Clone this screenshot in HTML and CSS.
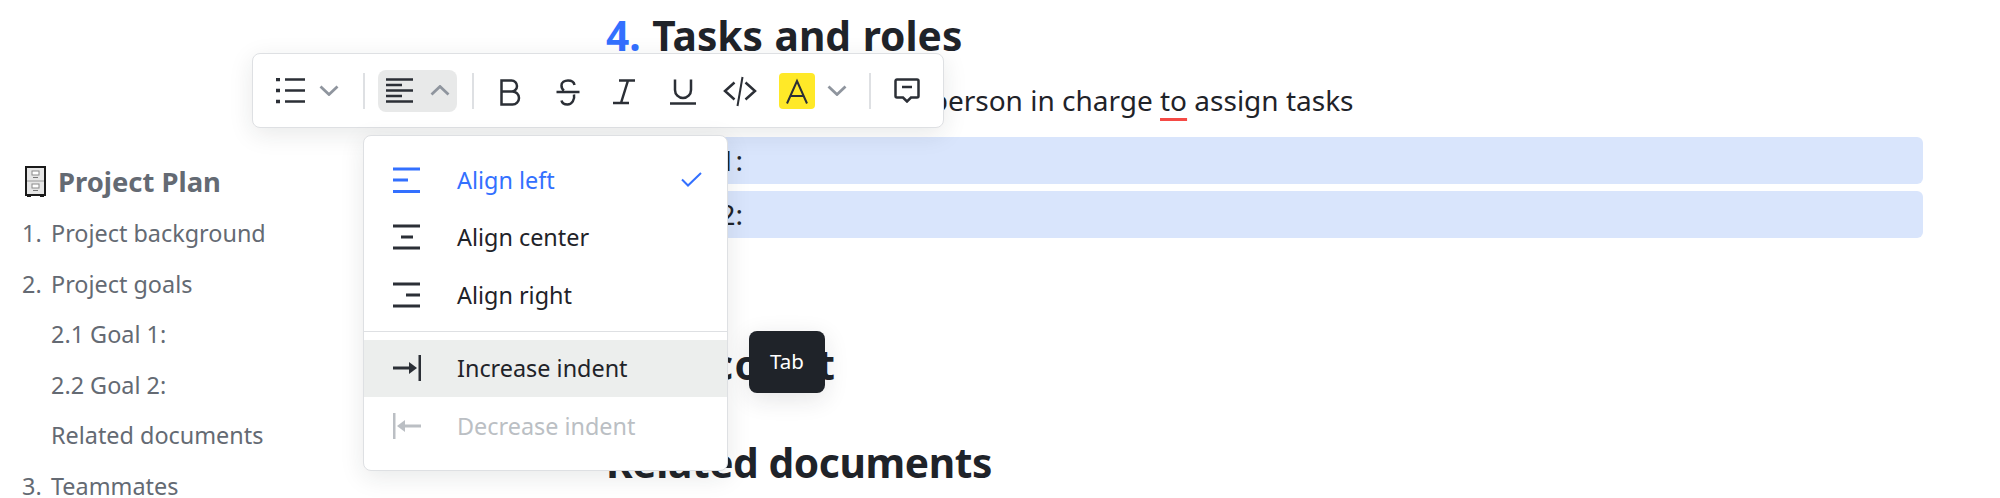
FILE: index.html
```html
<!DOCTYPE html>
<html lang="en">
<head>
  <meta charset="UTF-8" />
  <title>Project Plan</title>
  <link rel="stylesheet" href="styles.css">
</head>
<body>

<aside class="outline">
  <div class="outline-title">
    <svg class="cabinet" width="21" height="31" viewBox="0 0 21 31">
      <rect x="1" y="1" width="19" height="28" fill="#e6e6e6" stroke="#1a1a1a" stroke-width="2"/>
      <path d="M2 15h17" stroke="#9a9a9a"/>
      <rect x="7" y="5" width="7" height="4" fill="#fff" stroke="#8a8a8a"/>
      <rect x="7" y="18" width="7" height="4" fill="#fff" stroke="#8a8a8a"/>
      <path d="M8 11.500h5M8 24.500h5" stroke="#777"/>
      <path d="M2 29v2h4v-2M15 29v2h4v-2" fill="#1a1a1a"/>
    </svg>
    Project Plan
  </div>
  <ul class="outline-list">
    <li><span class="num">1.</span>Project background</li>
    <li><span class="num">2.</span>Project goals</li>
    <li><span class="num"></span>2.1 Goal 1:</li>
    <li><span class="num"></span>2.2 Goal 2:</li>
    <li><span class="num"></span>Related documents</li>
    <li><span class="num">3.</span>Teammates</li>
  </ul>
</aside>

<main class="doc">
  <h1 class="first"><span class="h-num">4.</span> Tasks and roles</h1>
  <p class="intro">Please contact the main person in charge <span class="typo">to</span> assign tasks</p>
  <div class="block">Goal 1:</div>
  <div class="block">Goal 2:</div>
  <h1 class="budget"><span class="h-num">5.</span> Account</h1>
  <h1 class="related">Related documents</h1>
</main>

<!-- floating toolbar -->
<div class="toolbar">
  <svg class="list-ico" width="29" height="26" viewBox="0 0 29 26">
    <path d="M0 1.500h4M0 12.500h4M0 23.500h4" stroke="#2b2f36" stroke-width="3.500"/>
    <path d="M9 1.500h20M9 12.500h20M9 23.500h20" stroke="#2b2f36" stroke-width="2.500"/>
  </svg>
  <svg class="chev" width="20" height="11" viewBox="0 0 20 11"><path d="M1.500 1.500L10 9.500l8.500-8" fill="none" stroke="#8f959e" stroke-width="2.800"/></svg>
  <span class="sep sep-a"></span>
  <div class="active-btn">
    <svg width="27" height="25" viewBox="0 0 27 25">
      <path d="M0 1.500h27M0 7h16M0 12.500h27M0 18h16M0 23.500h27" stroke="#2b2f36" stroke-width="2.500"/>
    </svg>
    <svg width="20" height="11" viewBox="0 0 20 11"><path d="M1.500 9.500L10 1.500l8.500 8" fill="none" stroke="#8f959e" stroke-width="2.800"/></svg>
  </div>
  <span class="sep sep-b"></span>
  <div class="marks">
    <svg width="36" height="36" viewBox="0 0 36 36" fill="none" stroke="#2b2f36" stroke-width="2.500">
      <path d="M9.500 18.500V7.500h10a5.500 5.500 0 0 1 0 11h-10v13h11a6.500 6.500 0 0 0 0-13"/>
    </svg>
    <svg width="36" height="36" viewBox="0 0 36 36" fill="none" stroke="#2b2f36" stroke-width="2.500">
      <path d="M6.500 19h23M24.500 12C24 9 21.500 7.500 18 7.500c-3.500 0-6.500 2-6.500 5 0 2.500 1 4 2.500 5M24 21.500c1 5-2 10-6.500 10-3 0-5.500-1.500-6-4"/>
    </svg>
    <svg width="36" height="36" viewBox="0 0 36 36" fill="none" stroke="#2b2f36" stroke-width="2.500">
      <path d="M12 7.500h16M6 30h16M21 7.500L14 30"/>
    </svg>
    <svg width="36" height="36" viewBox="0 0 36 36" fill="none" stroke="#2b2f36" stroke-width="2.500">
      <path d="M10 6.500V17a8 8 0 0 0 16 0V6.500M5 30.500h26"/>
    </svg>
    <svg width="36" height="36" viewBox="0 0 36 36" fill="none" stroke="#2b2f36" stroke-width="2.500">
      <path d="M12.500 9.500L3 18l9.500 8.500M23.500 9.500L33 18l-9.500 8.500"/>
      <path d="M20.500 4l-5 29" stroke-width="2"/>
    </svg>
    <div class="hl-btn">
      <svg width="36" height="36" viewBox="0 0 36 36" fill="none" stroke="#2b2f36" stroke-width="2">
        <path d="M8 30.500L18 8l10 22.500M11 23h14"/>
      </svg>
    </div>
  </div>
  <svg class="chev chev-hl" width="20" height="11" viewBox="0 0 20 11"><path d="M1.500 1.500L10 9.500l8.500-8" fill="none" stroke="#8f959e" stroke-width="2.800"/></svg>
  <span class="sep sep-c"></span>
  <svg class="comment-ico" width="26" height="25" viewBox="0 0 26 25" fill="none" stroke="#2b2f36" stroke-width="2.500">
    <path d="M3 1.500h20a1.500 1.500 0 0 1 1.500 1.500v15a1.500 1.500 0 0 1-1.500 1.500h-6L13 23.500l-4-4H3A1.500 1.500 0 0 1 1.500 18V3A1.500 1.500 0 0 1 3 1.500z"/>
    <path d="M8 9h10"/>
  </svg>
</div>

<!-- align menu -->
<div class="menu">
  <div class="menu-item is-on">
    <svg class="menu-ico" width="28" height="26" viewBox="0 0 28 26"><path d="M0 2h27M0 13h15M0 24.500h27" stroke="#3370ff" stroke-width="3"/></svg>
    Align left
    <svg class="check" width="21" height="15" viewBox="0 0 21 15"><path d="M1 7.500l6 6L20 1" fill="none" stroke="#3370ff" stroke-width="2"/></svg>
  </div>
  <div class="menu-item">
    <svg class="menu-ico" width="28" height="26" viewBox="0 0 28 26"><path d="M0 2h27M8 13h12M0 24h27" stroke="#2b2f36" stroke-width="3"/></svg>
    Align center
  </div>
  <div class="menu-item">
    <svg class="menu-ico" width="28" height="26" viewBox="0 0 28 26"><path d="M0 2h27M13 13h14M0 24h27" stroke="#2b2f36" stroke-width="3"/></svg>
    Align right
  </div>
  <div class="menu-line"></div>
  <div class="menu-item is-hover">
    <svg class="menu-ico" width="28" height="28" viewBox="0 0 28 28">
      <path d="M0 14h18M27 1v26" stroke="#2b2f36" stroke-width="3"/>
      <path d="M16 8l8 6-8 6z" fill="#2b2f36"/>
    </svg>
    Increase indent
  </div>
  <div class="menu-item is-off">
    <svg class="menu-ico" width="28" height="28" viewBox="0 0 28 28">
      <path d="M28 14H10M1 1v26" stroke="#bbbfc4" stroke-width="3"/>
      <path d="M12 8l-8 6 8 6z" fill="#bbbfc4"/>
    </svg>
    Decrease indent
  </div>
</div>

<div class="tip">Tab</div>

</body>
</html>
```

FILE: styles.css
```css
html, body {
  height: 498px;
  overflow: hidden;
}
body {
  margin: 0;
  display: flex;
  background: #fff;
  color: #1f2329;
  font-family: "Noto Sans", "Open Sans", sans-serif;
}

/* left outline */
.outline {
  width: 606px;
  flex: none;
  padding: 156px 0 0 22px;
  box-sizing: border-box;
  color: #646a73;
  font-size: 23.400px;
}
.outline-title {
  display: flex;
  align-items: center;
  gap: 12px;
  height: 50px;
  margin-left: 3px;
  font-weight: bold;
  font-size: 27.400px;
}
.cabinet {
  flex: none;
}
.outline-list {
  list-style: none;
  margin: 2px 0 0;
  padding: 0;
}
.outline-list li {
  display: flex;
  height: 50.500px;
  line-height: 50.500px;
}
.num {
  width: 29px;
  flex: none;
}

/* document */
.doc {
  flex: 1;
  padding-right: 77px;
}
h1 {
  margin: 0;
  font-size: 40.700px;
  line-height: 50px;
  font-weight: bold;
}
.h-num {
  color: #3370ff;
}
.first {
  margin-top: 10px;
  word-spacing: 1px;
}
.intro {
  margin: 20px 0 17px;
  padding-left: 4px;
  font-size: 28px;
  line-height: 40px;
}
.typo {
  text-decoration: underline;
  text-decoration-color: #f54a45;
  text-decoration-thickness: 3px;
  text-underline-offset: 7px;
}
.block {
  height: 47px;
  line-height: 47px;
  margin-bottom: 7px;
  padding-left: 46px;
  background: #d9e5fc;
  border-radius: 6px;
  font-size: 28px;
}
.budget {
  margin-top: 101px;
  letter-spacing: 1.500px;
  word-spacing: 4px;
}
.related {
  margin-top: 48px;
  letter-spacing: -0.400px;
}

/* toolbar */
.toolbar {
  position: absolute;
  left: 252px;
  top: 53px;
  width: 692px;
  height: 75px;
  box-sizing: border-box;
  padding-left: 23px;
  display: flex;
  align-items: center;
  background: #fff;
  border: 1px solid #dee0e3;
  border-radius: 8px;
  box-shadow: 0 6px 24px rgba(31, 35, 41, 0.1);
}
.toolbar svg {
  display: block;
  flex: none;
}
.chev {
  margin-left: 14px;
}
.sep {
  width: 2px;
  height: 36px;
  background: #dee0e3;
  flex: none;
}
.sep-a {
  margin: 0 13px 0 24px;
}
.sep-b {
  margin: 0 18px 0 15px;
}
.sep-c {
  margin: 0 23px 0 22px;
}
.active-btn {
  display: flex;
  align-items: center;
  gap: 17px;
  width: 79px;
  height: 42px;
  box-sizing: border-box;
  padding-left: 8px;
  background: #e8e9e9;
  border-radius: 8px;
}
.marks {
  display: flex;
  gap: 21.500px;
}
.hl-btn {
  background: #ffe928;
  border-radius: 4px;
  margin-left: -0.500px;
}
.chev-hl {
  margin-left: 12px;
}

/* dropdown */
.menu {
  position: absolute;
  left: 363px;
  top: 135px;
  width: 365px;
  box-sizing: border-box;
  padding: 15px 0;
  background: #fff;
  border: 1px solid #dee0e3;
  border-radius: 8px;
  box-shadow: 0 6px 24px rgba(31, 35, 41, 0.1);
  font-size: 23.400px;
}
.menu-item {
  display: flex;
  align-items: center;
  height: 57.500px;
  padding: 0 25px 0 29px;
}
.menu-ico {
  width: 28px;
  flex: none;
  margin-right: 36px;
}
.check {
  margin-left: auto;
}
.is-on {
  color: #3370ff;
}
.is-hover {
  background: #eceeed;
}
.is-off {
  color: #bbbfc4;
}
.menu-line {
  height: 1px;
  margin: 7px 0 8px;
  background: #dee0e3;
}

.tip {
  position: absolute;
  left: 749px;
  top: 331px;
  width: 76px;
  height: 62px;
  line-height: 60px;
  text-align: center;
  color: #fff;
  background: #1f2329;
  border-radius: 8px;
  font-size: 20.500px;
  box-shadow: 0 6px 24px rgba(31, 35, 41, 0.12);
}
```
